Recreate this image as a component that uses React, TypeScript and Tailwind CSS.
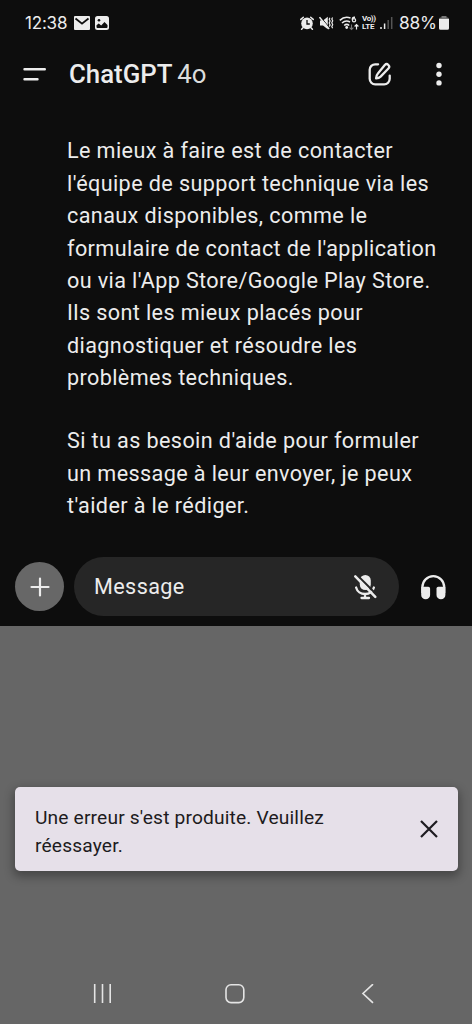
const MESSAGE = [
  [
    'Le mieux à faire est de contacter',
    "l'équipe de support technique via les",
    'canaux disponibles, comme le',
    "formulaire de contact de l'application",
    "ou via l'App Store/Google Play Store.",
    'Ils sont les mieux placés pour',
    'diagnostiquer et résoudre les',
    'problèmes techniques.',
  ],
  ["Si tu as besoin d'aide pour formuler", 'un message à leur envoyer, je peux', "t'aider à le rédiger."],
]

function StatusBar() {
  return (
    <div className="flex h-[46px] items-center pl-[25px] text-[17px] text-[#ececec]">
      <span className="w-[49px] pt-px font-['Inter',sans-serif] tracking-[-0.2px]">12:38</span>
      <svg width="16" height="14" viewBox="0 0 16 14">
        <rect width="16" height="14" rx="1" fill="#ececec" />
        <path d="M1.5 2.5 8 7.7l6.5-5.2" fill="none" stroke="#0d0d0d" strokeWidth="1.8" />
      </svg>
      <svg className="ml-[5px]" width="14" height="14" viewBox="0 0 14 14">
        <rect width="14" height="14" rx="2.5" fill="#ececec" />
        <circle cx="4" cy="4.2" r="1.3" fill="#0d0d0d" />
        <path d="M1.5 11V9.2l2.2-1.7 2.5 2L9.5 6l3 3v2a1 1 0 0 1-1 1h-9a1 1 0 0 1-1-1Z" fill="#0d0d0d" />
      </svg>
      <svg className="ml-[191px]" width="14" height="14" viewBox="0 0 14 14">
        <circle cx="7" cy="7.4" r="5.8" fill="#ececec" />
        <path d="m.8 3.4 2.5-2.1M13.2 3.4l-2.5-2.1M3 11.8l-1.4 1.5M11 11.8l1.4 1.5" stroke="#ececec" strokeWidth="1.5" strokeLinecap="round" />
        <path d="M7 4v4h2.8" fill="none" stroke="#0d0d0d" strokeWidth="1.3" />
      </svg>
      <svg className="ml-[5px]" width="15" height="14" viewBox="0 0 15 14">
        <path d="M1 4.5h3L8.8.8v12.4L4 9.5H1Z" fill="#ececec" />
        <path d="m1.5.7 8.6 10.6" stroke="#0d0d0d" strokeWidth="1" />
        <path d="m.5 1.2 9.6 11.8" stroke="#ececec" strokeWidth="1.5" />
        <path d="m10.9 1.8-.7 1.5.9 1.8-.9 2 .9 1.8-.9 1.7M13.6 1.5l-.8 1.5.9 1.8-.9 2 .9 2-.9 1.8.8 1.7" fill="none" stroke="#ececec" strokeWidth="1.2" />
      </svg>
      <svg className="ml-[5px]" width="21" height="15" viewBox="0 0 21 15">
        <path d="M.8 4.3C4.3 1 8.3.8 11.5 2M3 7c2.4-2.2 5.5-2.4 8-1M5.2 9.5c1.4-1.3 3.6-1.3 5 0" fill="none" stroke="#ececec" strokeWidth="1.6" />
        <circle cx="7.7" cy="11.5" r="1.4" fill="#ececec" />
        <path d="M16 1.2h-.7c-1.4 0-2 1-2 2.6" fill="none" stroke="#ececec" strokeWidth="1.4" />
        <circle cx="15" cy="4.3" r="1.6" fill="none" stroke="#ececec" strokeWidth="1.3" />
        <path d="M12.5 8.5v5m-1.9-1.9 1.9 1.9 1.9-1.9" fill="none" stroke="#777" strokeWidth="1.1" />
        <path d="M17.5 13.5v-5m-1.9 2 1.9-1.9 1.9 1.9" fill="none" stroke="#ececec" strokeWidth="1.2" />
      </svg>
      <div className="ml-[2px] flex w-[15px] flex-col font-['Roboto',sans-serif] text-[8px] leading-[8px] font-bold whitespace-nowrap">
        <span className="tracking-[-0.4px]">Vo))</span>
        <span className="tracking-[-0.2px]">LTE</span>
      </div>
      <svg className="ml-[3px]" width="13" height="14" viewBox="0 0 13 14">
        <path d="M1 11v2M4.6 7.5V13" stroke="#ececec" strokeWidth="1.5" />
        <path d="M8.2 4v9M11.7 1v12" stroke="#555" strokeWidth="1.5" />
      </svg>
      <span className="ml-[6px] w-[40px] font-['Inter',sans-serif] text-[17.3px] tracking-[-0.2px]">88%</span>
      <svg width="10" height="14" viewBox="0 0 10 14">
        <path d="M2.5 0h5v1.5h1A1.5 1.5 0 0 1 10 3v1H0V3a1.5 1.5 0 0 1 1.5-1.5h1Z" fill="#777" />
        <path d="M0 3h10v9.3a1.5 1.5 0 0 1-1.5 1.5h-7A1.5 1.5 0 0 1 0 12.3Z" fill="#ececec" />
      </svg>
    </div>
  )
}

function Header() {
  return (
    <header className="flex h-[56px] items-center pl-[23px] text-[#ececec]">
      <svg width="24" height="16" viewBox="0 0 24 16" stroke="currentColor" strokeWidth="2.4" strokeLinecap="round">
        <path d="M1.5 3.3h20.3M1.5 13.3h13" />
      </svg>
      <h1 className="ml-[22px] w-[298px] text-[25.8px] leading-8 font-medium whitespace-nowrap">
        ChatGPT <span className="-ml-[1px] font-normal text-[#dcdcdc]">4o</span>
      </h1>
      <button type="button" aria-label="Nouveau chat">
        <svg width="25" height="24" viewBox="0 0 24 24" fill="none" stroke="currentColor" strokeWidth="2.3" strokeLinecap="round" strokeLinejoin="round">
          <path d="M10.6 2.3H7.7a5.5 5.5 0 0 0-5.5 5.5v9a5.5 5.5 0 0 0 5.5 5.5h9a5.5 5.5 0 0 0 5.5-5.5v-3.2" />
          <path d="M17.3 3a2.5 2.5 0 0 1 3.6 3.5l-7.8 8.1c-1.2 1.1-2.6 1.6-4.5 1.8.1-2.1.7-3.7 1.8-4.9Z" />
        </svg>
      </button>
      <button type="button" aria-label="Options" className="ml-[43px]">
        <svg width="8" height="24" viewBox="0 0 8 24" fill="currentColor">
          <circle cx="4" cy="3.5" r="2.7" />
          <circle cx="4" cy="12.2" r="2.7" />
          <circle cx="4" cy="20.9" r="2.7" />
        </svg>
      </button>
    </header>
  )
}

function Composer() {
  return (
    <div className="flex items-center pl-[15px] text-[#ececec]">
      <button type="button" aria-label="Ajouter" className="flex size-[49px] items-center justify-center rounded-full bg-[#676767]">
        <svg width="20" height="20" viewBox="0 0 20 20" stroke="currentColor" strokeWidth="2.2" strokeLinecap="round">
          <path d="M10 1.5v17M1.5 10h17" />
        </svg>
      </button>
      <div className="ml-[10px] flex h-[59px] w-[325px] items-center justify-between rounded-full bg-[#262626] pr-[22px] pl-5">
        <span className="pt-[2px] text-[21.6px] tracking-[0.4px]">Message</span>
        <svg width="24" height="26" viewBox="0 0 24 26" fill="none">
          <rect x="6.8" y="1" width="11" height="15" rx="5.5" fill="currentColor" />
          <path d="M3.1 13.5c1 4 4.8 6.5 9 6.5 4.3 0 7.7-2.6 8.8-6.5M12 20v4M8.5 24h7.5" stroke="currentColor" strokeWidth="2.3" strokeLinecap="round" />
          <path d="m4 1 20 20" stroke="#262626" strokeWidth="2" />
          <path d="m2.3 2.3 20 20.5" stroke="currentColor" strokeWidth="2.5" strokeLinecap="round" />
        </svg>
      </div>
      <svg className="ml-[21px]" width="26" height="26" viewBox="0 0 26 26" fill="none">
        <path d="M2.4 19v-5.9a10.9 10.9 0 0 1 21.8 0V19" stroke="currentColor" strokeWidth="2.2" />
        <path d="M1.2 12.8h7.1a1.8 1.8 0 0 1 1.8 1.8v6.3a4.4 4.4 0 0 1-8.9 0Z" fill="currentColor" />
        <path d="M25.4 12.8h-7.1a1.8 1.8 0 0 0-1.8 1.8v6.3a4.4 4.4 0 0 0 8.9 0Z" fill="currentColor" />
      </svg>
    </div>
  )
}

function Snackbar() {
  return (
    <div
      role="alert"
      className="mr-[14px] ml-[15px] flex h-[84px] items-center justify-between rounded-[5px] bg-[#e6e0e9] pr-[19px] pl-5 text-[#1d1b20] shadow-[0_4px_10px_2px_rgba(0,0,0,0.3)]"
    >
      <p className="pt-[5px] text-[19.2px] leading-[27.5px] tracking-[0.16px] whitespace-nowrap">
        Une erreur s'est produite. Veuillez
        <br />
        réessayer.
      </p>
      <button type="button" aria-label="Fermer">
        <svg width="20" height="20" viewBox="0 0 20 20" stroke="currentColor" strokeWidth="2.2">
          <path d="m2 2 16 16M18 2 2 18" />
        </svg>
      </button>
    </div>
  )
}

function NavBar() {
  return (
    <nav className="flex h-[61px] items-center pl-[93px]">
      <svg width="20" height="20" viewBox="0 0 20 20" stroke="#e4e4e4" strokeWidth="1.6">
        <path d="M1.7 0v19M9.5 0v19M17.2 0v19" />
      </svg>
      <svg className="ml-[112px]" width="20" height="20" viewBox="0 0 20 20" fill="none" stroke="#e4e4e4" strokeWidth="1.6">
        <rect x="1" y=".8" width="17.8" height="17.8" rx="5" />
      </svg>
      <svg className="ml-[116px]" width="14" height="20" viewBox="0 0 14 20" fill="none" stroke="#e4e4e4" strokeWidth="1.7">
        <path d="M12 .2 2 9.5l10 9.3" />
      </svg>
    </nav>
  )
}

export default function App() {
  return (
    <div className="flex h-[1024px] w-[472px] flex-col overflow-hidden bg-[#666] font-['Roboto',sans-serif]">
      <div className="flex h-[626px] flex-col bg-[#0d0d0d]">
        <StatusBar />
        <Header />
        <main className="h-[455px] pt-[33.4px] pl-[67px] text-[21.6px] leading-[32.4px] tracking-[0.39px] text-[#ececec]">
          {MESSAGE.map((lines) => (
            <p key={lines[0]} className="mb-[30.5px]">
              {lines.map((line) => (
                <span key={line} className="block whitespace-nowrap">
                  {line}
                </span>
              ))}
            </p>
          ))}
        </main>
        <Composer />
      </div>
      <div className="flex flex-1 flex-col justify-between pt-[161px]">
        <Snackbar />
        <NavBar />
      </div>
    </div>
  )
}
